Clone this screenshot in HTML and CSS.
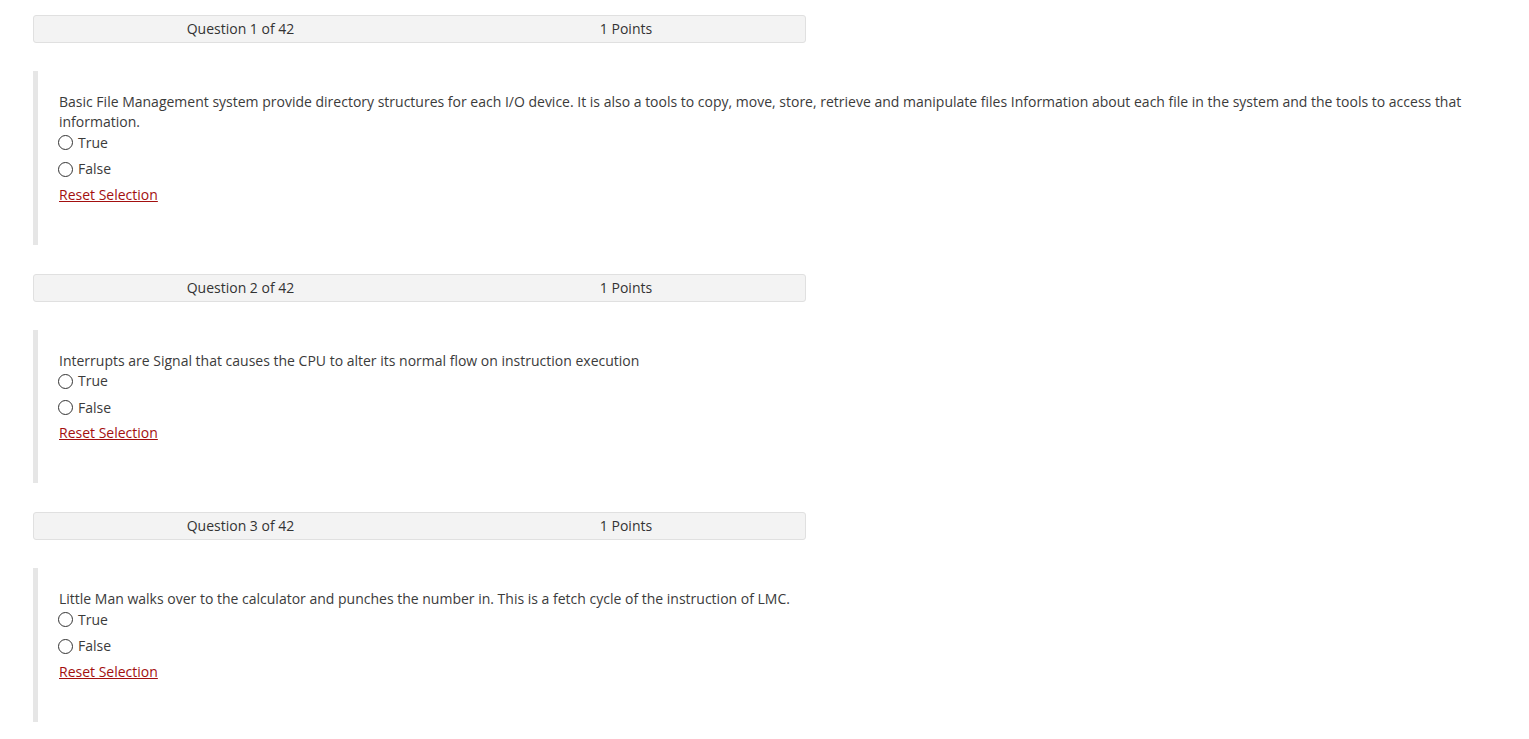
FILE: index.html
```html
<!DOCTYPE html>
<html>
<head>
<meta charset="utf-8">
<link rel="stylesheet" href="styles.css">
</head>
<body>
<div class="page">
  <section class="question">
    <div class="q-header"><div class="q-num">Question 1 of 42</div><div class="q-pts">1 Points</div></div>
    <div class="q-body">
      <p class="q-text">Basic File Management system provide directory structures for each I/O device. It is also a tools to copy, move, store, retrieve and manipulate files Information about each file in the system and the tools to access that information.</p>
      <label class="opt"><span class="radio"></span>True</label>
      <label class="opt"><span class="radio"></span>False</label>
      <a class="reset" href="#">Reset Selection</a>
    </div>
  </section>
  <section class="question">
    <div class="q-header"><div class="q-num">Question 2 of 42</div><div class="q-pts">1 Points</div></div>
    <div class="q-body">
      <p class="q-text">Interrupts are Signal that causes the CPU to alter its normal flow on instruction execution</p>
      <label class="opt"><span class="radio"></span>True</label>
      <label class="opt"><span class="radio"></span>False</label>
      <a class="reset" href="#">Reset Selection</a>
    </div>
  </section>
  <section class="question">
    <div class="q-header"><div class="q-num">Question 3 of 42</div><div class="q-pts">1 Points</div></div>
    <div class="q-body">
      <p class="q-text">Little Man walks over to the calculator and punches the number in. This is a fetch cycle of the instruction of LMC.</p>
      <label class="opt"><span class="radio"></span>True</label>
      <label class="opt"><span class="radio"></span>False</label>
      <a class="reset" href="#">Reset Selection</a>
    </div>
  </section>
</div>
</body>
</html>
```
FILE: styles.css
```css
html, body {
  margin: 0;
  padding: 0;
  background: #fff;
}
body {
  font-family: "Open Sans", "Liberation Sans", sans-serif;
  font-size: 14px;
  line-height: 20px;
  color: #3b3b3b;
}
.page {
  padding: 15px 33px 0 33px;
  display: flex;
  flex-direction: column;
  gap: 29px;
}
.question {
  display: flex;
  flex-direction: column;
  gap: 28px;
}
.q-header {
  width: 771px;
  height: 26px;
  border: 1px solid #e0e0e0;
  border-radius: 3px;
  background: #f3f3f3;
  display: grid;
  grid-template-columns: 413px 1fr;
  align-items: center;
  color: #333;
}
.q-num, .q-pts {
  text-align: center;
}
.q-body {
  border-left: 5px solid #e6e6e6;
  padding: 21px 21px 40px 21px;
  display: flex;
  flex-direction: column;
  align-items: flex-start;
}
.q-text {
  margin: 0;
}
.opt {
  display: flex;
  align-items: center;
  gap: 5px;
  height: 21px;
}
.opt + .opt {
  margin-top: 5.5px;
}
.radio {
  width: 13px;
  height: 13px;
  margin-left: -1px;
  border: 1px solid #333;
  border-radius: 50%;
  display: inline-block;
  box-sizing: content-box;
}
.reset {
  color: #a30f0f;
  text-decoration: underline;
  margin-top: 5px;
}
```
